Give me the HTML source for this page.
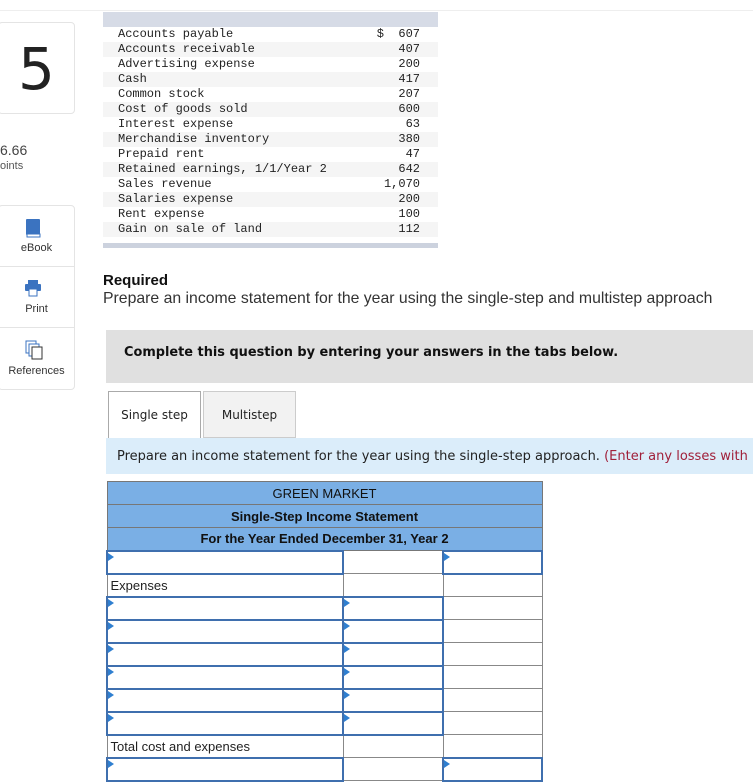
<!DOCTYPE html>
<html><head><style>
*{margin:0;padding:0;box-sizing:border-box}
body{width:753px;height:776px;overflow:hidden;background:#fff;font-family:"Liberation Sans",sans-serif;position:relative;color:#222}
.a{position:absolute}
.mono{font-family:"Liberation Mono",monospace;font-size:12px}
.side{position:absolute;left:-2px;width:77px;border:1px solid #e4e4e4;border-radius:4px;background:#fff}
.sb{height:61px;border-bottom:1px solid #e4e4e4;text-align:center;font-size:11px;color:#333;position:relative}
.sb:last-child{border-bottom:none}
.sb span{position:absolute;left:0;right:0;bottom:12px}
td{border:1px solid #888;height:23px;font-size:13px;padding:0 3px;position:relative}
.h td{background:#7aafe5;text-align:center;color:#111;border:1px solid #777}
.in{border:2px solid #3f6fae}
.in::before{content:"";position:absolute;left:0;top:1px;border-left:6px solid #2f7fd0;border-top:4px solid transparent;border-bottom:4px solid transparent}
.g{border-top:2px solid #8a7420}
.v{font-family:"DejaVu Sans",sans-serif}
</style></head><body>
<div class="a" style="left:0;top:10px;width:753px;height:1px;background:#eee"></div>
<div class="side" style="top:22px;height:92px;text-align:center;font-size:58px;line-height:92px;color:#222;font-family:'DejaVu Sans',sans-serif">5</div>
<div class="a" style="left:0;top:142px;font-size:14px;color:#444">6.66</div>
<div class="a" style="left:0;top:160px;font-size:11px;color:#555">oints</div>
<div class="side" style="top:205px">
<div class="sb"><svg class="a" style="left:26px;top:12px" width="16" height="20"><rect x="1" y="1" width="14" height="16" rx="1" fill="#3b73c0"/><rect x="2" y="16" width="13" height="3" fill="#fff" stroke="#3b73c0"/></svg><span>eBook</span></div>
<div class="sb"><svg class="a" style="left:25px;top:12px" width="18" height="18"><rect x="4" y="1" width="10" height="4" fill="#3b73c0"/><rect x="1" y="5" width="16" height="7" rx="1" fill="#3b73c0"/><rect x="5" y="10" width="8" height="7" fill="#fff" stroke="#3b73c0"/></svg><span>Print</span></div>
<div class="sb"><svg class="a" style="left:26px;top:12px" width="18" height="20"><rect x="1" y="1" width="10" height="12" fill="#fff" stroke="#3b73c0"/><rect x="4" y="4" width="10" height="12" fill="#fff" stroke="#3b73c0"/><rect x="7" y="7" width="10" height="12" fill="#fff" stroke="#333"/></svg><span>References</span></div>
</div>
<div class="a" style="left:103px;top:12px;width:335px;height:15px;background:#d6dbe6"></div>
<div class="a mono" style="left:103px;top:27px;width:335px;line-height:15px">
<div style="position:relative;padding-left:15px">Accounts payable<span class="a" style="right:18px">$&nbsp;&nbsp;607</span></div>
<div style="position:relative;padding-left:15px;background:#f5f5f5">Accounts receivable<span class="a" style="right:18px">407</span></div>
<div style="position:relative;padding-left:15px">Advertising expense<span class="a" style="right:18px">200</span></div>
<div style="position:relative;padding-left:15px;background:#f5f5f5">Cash<span class="a" style="right:18px">417</span></div>
<div style="position:relative;padding-left:15px">Common stock<span class="a" style="right:18px">207</span></div>
<div style="position:relative;padding-left:15px;background:#f5f5f5">Cost of goods sold<span class="a" style="right:18px">600</span></div>
<div style="position:relative;padding-left:15px">Interest expense<span class="a" style="right:18px">63</span></div>
<div style="position:relative;padding-left:15px;background:#f5f5f5">Merchandise inventory<span class="a" style="right:18px">380</span></div>
<div style="position:relative;padding-left:15px">Prepaid rent<span class="a" style="right:18px">47</span></div>
<div style="position:relative;padding-left:15px;background:#f5f5f5">Retained earnings, 1/1/Year 2<span class="a" style="right:18px">642</span></div>
<div style="position:relative;padding-left:15px">Sales revenue<span class="a" style="right:18px">1,070</span></div>
<div style="position:relative;padding-left:15px;background:#f5f5f5">Salaries expense<span class="a" style="right:18px">200</span></div>
<div style="position:relative;padding-left:15px">Rent expense<span class="a" style="right:18px">100</span></div>
<div style="position:relative;padding-left:15px;background:#f5f5f5">Gain on sale of land<span class="a" style="right:18px">112</span></div>
</div>
<div class="a" style="left:103px;top:243px;width:335px;height:5px;background:#ccd2de"></div>
<div class="a" style="left:103px;top:272px;font-size:15px;font-weight:bold;color:#111">Required</div>
<div class="a" style="left:103px;top:290px;font-size:15.8px;color:#333;white-space:nowrap">Prepare an income statement for the year using the single-step and multistep approach</div>
<div class="a" style="left:106px;top:330px;width:647px;height:53px;background:#e0e0e0"></div>
<div class="a v" style="left:124px;top:345px;font-size:12.9px;font-weight:bold;color:#111;white-space:nowrap">Complete this question by entering your answers in the tabs below.</div>
<div class="a v" style="left:108px;top:391px;width:93px;height:48px;border:1px solid #aaa;border-bottom:none;background:#fff;font-size:12px;text-align:center;line-height:46px">Single step</div>
<div class="a v" style="left:203px;top:391px;width:93px;height:47px;border:1px solid #ccc;background:#f2f2f2;font-size:12px;text-align:center;line-height:46px">Multistep</div>
<div class="a" style="left:106px;top:438px;width:647px;height:36px;background:#dbedfa"></div>
<div class="a v" style="left:117px;top:449px;font-size:13px;color:#222;white-space:nowrap">Prepare an income statement for the year using the single-step approach. <span style="color:#a0203a">(Enter any losses with</span></div>
<table class="a" style="left:106px;top:481px;width:437px;border-collapse:collapse">
<tr class="h"><td colspan="3">GREEN MARKET</td></tr>
<tr class="h"><td colspan="3" style="font-weight:bold">Single-Step Income Statement</td></tr>
<tr class="h"><td colspan="3" style="font-weight:bold">For the Year Ended December 31, Year 2</td></tr>
<tr><td class="in" style="width:236px"></td><td style="width:100px"></td><td class="in"></td></tr>
<tr><td>Expenses</td><td></td><td></td></tr>
<tr><td class="in"></td><td class="in"></td><td></td></tr>
<tr><td class="in g"></td><td class="in g"></td><td></td></tr>
<tr><td class="in g"></td><td class="in g"></td><td></td></tr>
<tr><td class="in"></td><td class="in"></td><td></td></tr>
<tr><td class="in g"></td><td class="in g"></td><td></td></tr>
<tr><td class="in"></td><td class="in"></td><td></td></tr>
<tr><td>Total cost and expenses</td><td></td><td></td></tr>
<tr><td class="in"></td><td></td><td class="in"></td></tr>
</table>
</body></html>
